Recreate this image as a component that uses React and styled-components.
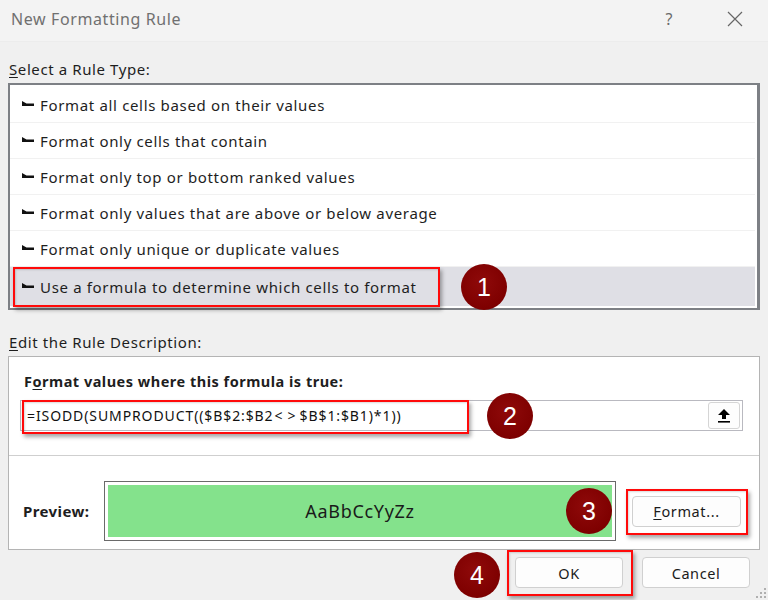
import styled, { createGlobalStyle } from "styled-components";

const GlobalStyle = createGlobalStyle`
  html, body {
    margin: 0;
    padding: 0;
    background: #f0f0f0;
  }
  body {
    font-family: "Noto Sans", "Open Sans", sans-serif;
    color: #1e1e1e;
  }
`

const Dialog = styled.div`
  width: 768px;
  height: 600px;
  display: flex;
  flex-direction: column;
  background: #f0f0f0;
  overflow: hidden;
  position: relative;
`

const TitleBar = styled.div`
  height: 41px;
  display: flex;
  align-items: center;
  background: #f3f3f3;
  border-bottom: 1px solid #ececec;
  padding-left: 11px;
`

const Title = styled.div`
  flex: 1;
  font-size: 16px;
  letter-spacing: 0.6px;
  color: #707070;
  margin-top: -3px;
`

const TitleBtn = styled.div`
  width: 66px;
  height: 38px;
  display: flex;
  align-items: center;
  justify-content: center;
  color: #6a6a6a;
  font-size: 16px;
  margin-top: -4px;
`

const Body = styled.div`
  display: flex;
  flex-direction: column;
  padding: 0 8px;
`

const Label = styled.div`
  font-size: 15px;
  letter-spacing: 0.6px;
  line-height: 20px;
  margin-top: ${p => p.$top || 0}px;
  margin-bottom: ${p => p.$bottom || 0}px;
  padding-left: 1px;
  color: #1e1e1e;
  & u {
    text-underline-offset: 2px;
  }
`

const ListBox = styled.div`
  background: #fff;
  border: 2px solid #7d8085;
  border-right-width: 3px;
  padding: 2px 2px 2px 0;
  display: flex;
  flex-direction: column;
`

const Row = styled.div`
  position: relative;
  height: ${p => (p.$selected ? 39 : 36)}px;
  display: flex;
  align-items: center;
  padding-left: 12px;
  gap: 6px;
  font-size: 15px;
  letter-spacing: 0.66px;
  background: ${p => (p.$selected ? "#dfdfe5" : "#fff")};
  border-bottom: ${p => (p.$selected ? "none" : "1px solid #f1f1f1")};
  box-sizing: border-box;
`

const Highlight = styled.div`
  position: absolute;
  left: ${p => p.$l}px;
  top: ${p => p.$t}px;
  width: ${p => p.$w}px;
  height: ${p => p.$h}px;
  border: 2px solid #ff0a0a;
  box-sizing: border-box;
  box-shadow: 2px 3px 4px rgba(0, 0, 0, 0.35), inset 1px 1px 2px rgba(0, 0, 0, 0.15);
  pointer-events: none;
`

const Badge = styled.div`
  position: absolute;
  left: ${p => p.$l}px;
  top: ${p => p.$t}px;
  width: 46px;
  height: 46px;
  border-radius: 50%;
  background: radial-gradient(circle at 45% 40%, #8f0a0a 0%, #7e0000 70%, #6c0000 100%);
  color: #fff;
  font-family: "Liberation Sans", Arial, sans-serif;
  font-size: 25px;
  letter-spacing: 0;
  display: flex;
  align-items: center;
  justify-content: center;
  z-index: 5;
`

const DescBox = styled.div`
  background: #fff;
  border: 1px solid #b4b4b4;
  display: flex;
  flex-direction: column;
`

const DescTop = styled.div`
  padding: 14px 16px 24px 11px;
  border-bottom: 1px solid #cfcfcf;
  display: flex;
  flex-direction: column;
  gap: 9px;
`

const BoldLabel = styled.div`
  font-size: 14.5px;
  font-weight: 700;
  letter-spacing: 0.5px;
  line-height: 20px;
  padding-left: 4px;
  & u {
    text-underline-offset: 2px;
  }
`

const FormulaField = styled.div`
  position: relative;
  height: 31px;
  border: 1px solid #b9b9c0;
  box-sizing: border-box;
  display: flex;
  align-items: center;
  padding: 0 2px 0 6px;
`

const FormulaText = styled.div`
  flex: 1;
  font-size: 14px;
  letter-spacing: 0.9px;
  color: #111;
`

const Op = styled.span`
  letter-spacing: 5px;
  margin: 0 -1px 0 1px;
`

const IconBtn = styled.div`
  width: 30px;
  height: 25px;
  border: 1px solid #d5d5d5;
  border-radius: 3px;
  background: #fdfdfd;
  display: flex;
  align-items: center;
  justify-content: center;
`

const PreviewRow = styled.div`
  padding: 25px 0 8px 14px;
  display: flex;
  align-items: center;
`

const PreviewLabel = styled.div`
  font-size: 15px;
  font-weight: 700;
  letter-spacing: 0.4px;
  width: 81px;
`

const PreviewBox = styled.div`
  position: relative;
  width: 512px;
  height: 60px;
  box-sizing: border-box;
  border: 1px solid #6a6a6a;
  padding: 3px;
  background: #fff;
`

const PreviewFill = styled.div`
  height: 100%;
  background: #84e28c;
  display: flex;
  align-items: center;
  justify-content: center;
  font-size: 18px;
  letter-spacing: 0.7px;
  color: #1a1a1a;
`

const Button = styled.div`
  position: relative;
  width: ${p => p.$w || 108}px;
  height: 31px;
  box-sizing: border-box;
  border: 1px solid #d0d0d0;
  border-radius: 4px;
  background: #fdfdfd;
  display: flex;
  align-items: center;
  justify-content: center;
  font-size: 14.5px;
  letter-spacing: 0.6px;
  color: #1b1b1b;
  & u {
    text-underline-offset: 2px;
  }
`

const FormatWrap = styled.div`
  margin-left: 16px;
`

const Footer = styled.div`
  display: flex;
  justify-content: flex-end;
  gap: 19px;
  padding: 7px 18px 0 0;
`

const Grip = styled.svg`
  position: absolute;
  right: 2px;
  bottom: 2px;
`

function Arrow() {
  return (
    <svg width="12" height="7" viewBox="0 0 12 7">
      <polygon points="0,0 4.5,2.6 12,2.6 12,5 0,5" fill="#111" />
    </svg>
  )
}

const rules = [
  "Format all cells based on their values",
  "Format only cells that contain",
  "Format only top or bottom ranked values",
  "Format only values that are above or below average",
  "Format only unique or duplicate values",
]

function App() {
  return (
    <Dialog>
      <GlobalStyle />
      <TitleBar>
        <Title>New Formatting Rule</Title>
        <TitleBtn>?</TitleBtn>
        <TitleBtn>
          <svg width="16" height="16" viewBox="0 0 16 16">
            <path d="M1 1 L15 15 M15 1 L1 15" stroke="#666" strokeWidth="1.2" fill="none" />
          </svg>
        </TitleBtn>
      </TitleBar>
      <Body>
        <Label $top={17} $bottom={4}><u>S</u>elect a Rule Type:</Label>
        <ListBox>
          {rules.map(r => (
            <Row key={r}><Arrow />{r}</Row>
          ))}
          <Row $selected>
            <Arrow />Use a formula to determine which cells to format
            <Highlight $l={3} $t={0} $w={427} $h={40} />
            <Badge $l={451} $t={-3}>1</Badge>
          </Row>
        </ListBox>
        <Label $top={22} $bottom={4}><u>E</u>dit the Rule Description:</Label>
        <DescBox>
          <DescTop>
            <BoldLabel>F<u>o</u>rmat values where this formula is true:</BoldLabel>
            <FormulaField>
              <FormulaText>=ISODD(SUMPRODUCT(($B$2:$B2<Op>&lt;&gt;</Op>$B$1:$B1)*1))</FormulaText>
              <IconBtn>
                <svg width="14" height="15" viewBox="0 0 14 15">
                  <path d="M7 1 L13 7 L9 7 L9 11 L5 11 L5 7 L1 7 Z" fill="#000" />
                  <rect x="1" y="13" width="12" height="1.6" fill="#000" />
                </svg>
              </IconBtn>
              <Highlight $l={1} $t={-1} $w={447} $h={34} />
              <Badge $l={466} $t={-8}>2</Badge>
            </FormulaField>
          </DescTop>
          <PreviewRow>
            <PreviewLabel>Preview:</PreviewLabel>
            <PreviewBox>
              <PreviewFill>AaBbCcYyZz</PreviewFill>
              <Badge $l={461} $t={6}>3</Badge>
            </PreviewBox>
            <FormatWrap>
              <Button $w={109}>
                <u>F</u>ormat...
                <Highlight $l={-7} $t={-8} $w={122} $h={46} />
              </Button>
            </FormatWrap>
          </PreviewRow>
        </DescBox>
      </Body>
      <Footer>
        <Button>
          OK
          <Highlight $l={-9} $t={-8} $w={126} $h={46} />
          <Badge $l={-62} $t={-6}>4</Badge>
        </Button>
        <Button>Cancel</Button>
      </Footer>
      <Grip width="10" height="10" viewBox="0 0 10 10">
        <rect x="8" y="0" width="2" height="2" fill="#b0b0b0" />
        <rect x="4" y="4" width="2" height="2" fill="#b0b0b0" />
        <rect x="8" y="4" width="2" height="2" fill="#b0b0b0" />
        <rect x="0" y="8" width="2" height="2" fill="#b0b0b0" />
        <rect x="4" y="8" width="2" height="2" fill="#b0b0b0" />
        <rect x="8" y="8" width="2" height="2" fill="#b0b0b0" />
      </Grip>
    </Dialog>
  )
}

export default App;
